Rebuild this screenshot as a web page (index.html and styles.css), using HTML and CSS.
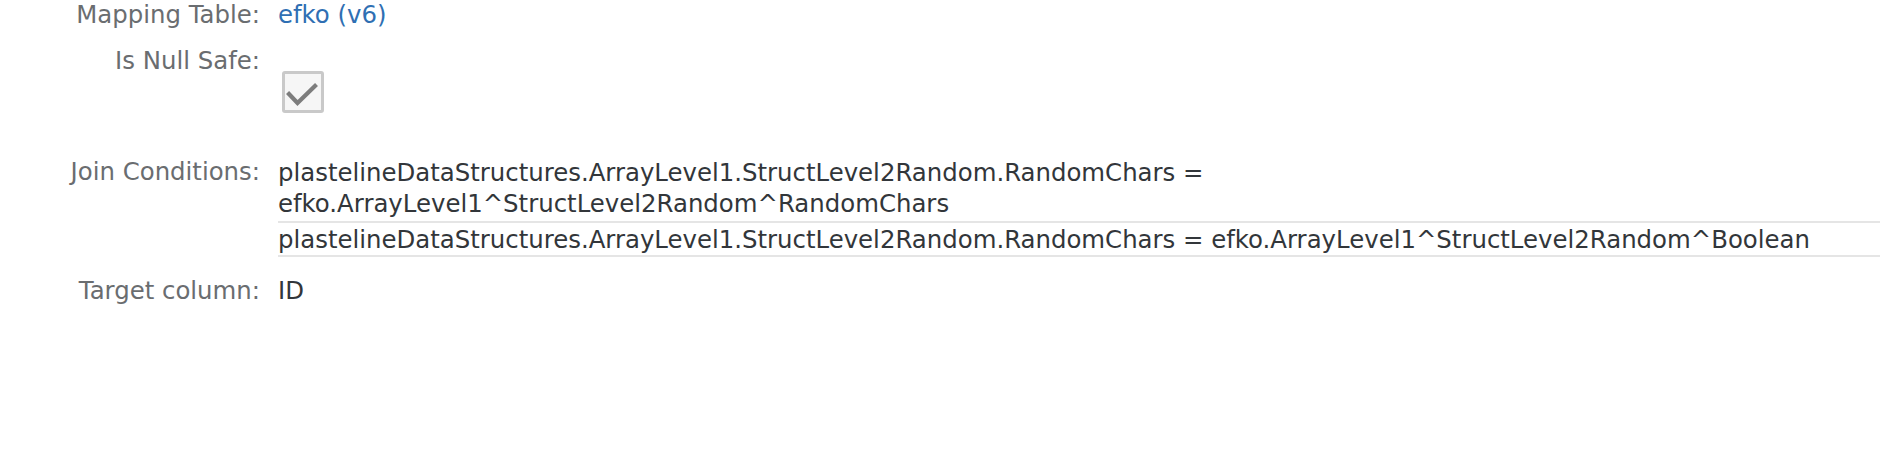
FILE: index.html
```html
<!DOCTYPE html>
<html lang="en">
<head>
<meta charset="utf-8">
<title>Mapping</title>
<link rel="stylesheet" href="styles.css">
</head>
<body>
<div class="form">
  <div class="row">
    <div class="label">Mapping Table:</div>
    <div class="value"><a class="link" href="#">efko (v6)</a></div>
  </div>
  <div class="row row-null">
    <div class="label">Is Null Safe:</div>
    <div class="value">
      <span class="checkbox">
        <svg viewBox="0 0 42 42" width="42" height="42" aria-hidden="true"><path d="M7 23 L15.5 32 L33 15" fill="none" stroke="#7d7d7d" stroke-width="4.2" stroke-linecap="square" stroke-linejoin="miter"/></svg>
      </span>
    </div>
  </div>
  <div class="row row-join">
    <div class="label">Join Conditions:</div>
    <div class="value">
      <ul class="conds">
        <li class="cond">plastelineDataStructures.ArrayLevel1.StructLevel2Random.RandomChars = efko.ArrayLevel1^StructLevel2Random^RandomChars</li>
        <li class="cond">plastelineDataStructures.ArrayLevel1.StructLevel2Random.RandomChars = efko.ArrayLevel1^StructLevel2Random^Boolean</li>
      </ul>
    </div>
  </div>
  <div class="row row-target">
    <div class="label">Target column:</div>
    <div class="value">ID</div>
  </div>
</div>
</body>
</html>
```
FILE: styles.css
```css
html, body {
  margin: 0;
  padding: 0;
  background: #ffffff;
}
body {
  font-family: "DejaVu Sans", "Noto Sans", sans-serif;
  font-size: 24.4px;
  line-height: 30px;
  color: #32363a;
}
.form {
  display: flex;
  flex-direction: column;
  padding: 0 18px 0 0;
}
.row {
  display: flex;
  gap: 18px;
  align-items: flex-start;
}
.label {
  flex: 0 0 260px;
  text-align: right;
  color: #6a6d70;
  white-space: nowrap;
}
.value {
  flex: 1 1 auto;
  min-width: 0;
}
.link {
  color: #2f6fb3;
  text-decoration: none;
}
.row-null {
  margin-top: 16px;
}
.checkbox {
  display: block;
  width: 36px;
  height: 36px;
  margin: 25px 0 0 4px;
  border: 3px solid #c9c9c9;
  border-radius: 3px;
  background: #f6f6f6;
  position: relative;
}
.checkbox svg {
  position: absolute;
  left: -3px;
  top: -3px;
}
.row-join {
  margin-top: 44px;
}
.conds {
  list-style: none;
  margin: 0;
  padding: 0;
}
.cond {
  line-height: 31px;
  padding: 0 32px 2px 0;
  border-bottom: 2px solid #e5e5e5;
}
.cond + .cond {
  padding: 1px 32px 0 0;
}
.row-target {
  margin-top: 19px;
}
```
